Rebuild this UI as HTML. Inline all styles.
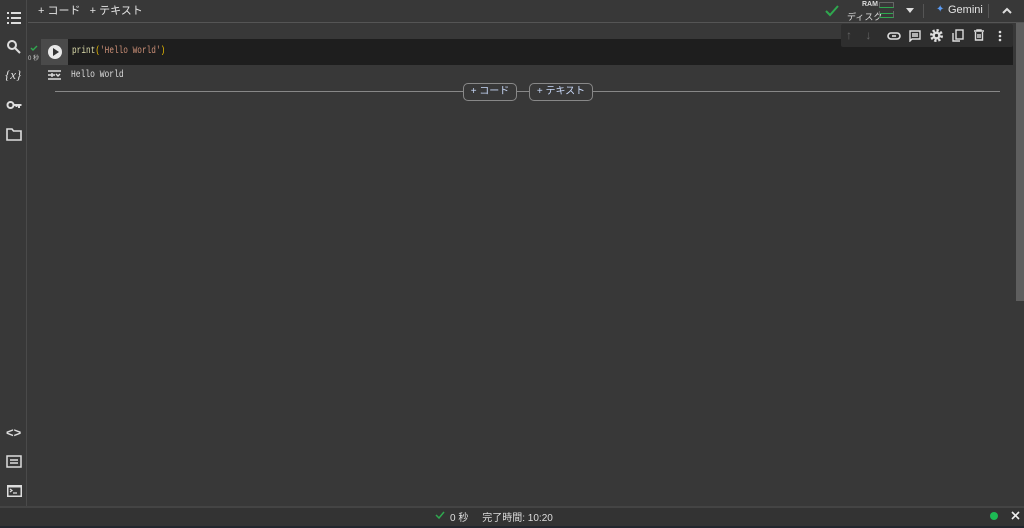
<!DOCTYPE html>
<html><head><meta charset="utf-8"><style>
*{margin:0;padding:0;box-sizing:border-box}
body{width:1024px;height:528px;background:#383838;overflow:hidden;position:relative;font-family:"Liberation Sans","Noto Sans CJK JP",sans-serif;color:#e3e3e3}
.a{position:absolute}
.mono{font-family:"Liberation Mono","Noto Sans CJK JP",monospace}
svg{position:absolute}
</style></head><body>
<div class="a" style="left:0;top:0;width:27px;height:507px;border-right:1px solid #4a4a4a;background:#383838"></div>
<svg style="left:6px;top:10px" width="16" height="16" viewBox="0 0 16 16" fill="#ddd"><rect x="1" y="2" width="2" height="2"/><rect x="5" y="2" width="10" height="2"/><rect x="1" y="7" width="2" height="2"/><rect x="5" y="7" width="10" height="2"/><rect x="1" y="12" width="2" height="2"/><rect x="5" y="12" width="10" height="2"/></svg>
<svg style="left:6px;top:39px" width="16" height="16" viewBox="0 0 16 16" fill="none" stroke="#ddd" stroke-width="2"><circle cx="6" cy="6" r="4"/><path d="M9 9l5 5"/></svg>
<div class="a" style="left:5px;top:67px;font-size:13px;color:#ddd;font-style:italic;font-family:'Liberation Serif',serif">{<i>x</i>}</div>
<svg style="left:6px;top:99px" width="17" height="12" viewBox="0 0 17 12" fill="none" stroke="#ddd" stroke-width="2"><circle cx="4.5" cy="6" r="3"/><path d="M7.5 6h8M13 6v3M10.5 6v2"/></svg>
<svg style="left:6px;top:127px" width="16" height="14" viewBox="0 0 16 14" fill="none" stroke="#ddd" stroke-width="1.6"><path d="M1 2h5l1.5 2H15v9H1z"/></svg>
<div class="a" style="left:6px;top:425px;font-size:13px;font-weight:bold;color:#ddd">&lt;&gt;</div>
<svg style="left:6px;top:455px" width="16" height="13" viewBox="0 0 16 13" fill="none" stroke="#ddd" stroke-width="1.5"><rect x="1" y="1" width="14" height="11"/><path d="M4 5h8M4 8h8"/></svg>
<svg style="left:7px;top:485px" width="15" height="12" viewBox="0 0 15 12"><rect x="0" y="0" width="15" height="12" fill="#ddd"/><rect x="1.5" y="2.5" width="12" height="8" fill="#383838"/><path d="M3 4l2 1.5-2 1.5M6 8h4" stroke="#ddd" stroke-width="1.2" fill="none"/></svg>
<div class="a" style="left:28px;top:22px;width:996px;height:1px;background:#555"></div>
<div class="a" style="left:38px;top:2px;font-size:11px;color:#e3e3e3">+ コード&nbsp;&nbsp; + テキスト</div>
<svg style="left:825px;top:5px" width="14" height="12" viewBox="0 0 14 12" fill="none" stroke="#2fa84f" stroke-width="2"><path d="M1 6l4 4 8-9"/></svg>
<div class="a" style="left:862px;top:1px;font-size:7px;font-weight:bold;color:#ddd">RAM</div>
<div class="a" style="left:847px;top:10px;font-size:9px;color:#ddd">ディスク</div>
<div class="a" style="left:879px;top:2px;width:15px;height:6px;border:1px solid #666;border-bottom-color:#2fa84f"></div>
<div class="a" style="left:879px;top:11px;width:15px;height:7px;border:1px solid #666;border-top:none;border-bottom:1px solid #2fa84f"><div style="margin-top:2px;height:1px;background:#2fa84f"></div></div>
<div class="a" style="left:906px;top:8px;border:4px solid transparent;border-top:5px solid #ddd"></div>
<div class="a" style="left:923px;top:4px;width:1px;height:14px;background:#555"></div>
<div class="a" style="left:936px;top:4px;font-size:10px;color:#5b9cf5">✦</div>
<div class="a" style="left:948px;top:4px;font-size:11px;color:#e3e3e3">Gemini</div>
<div class="a" style="left:988px;top:4px;width:1px;height:14px;background:#555"></div>
<svg style="left:1002px;top:7px" width="10" height="7" viewBox="0 0 10 7" fill="none" stroke="#ddd" stroke-width="2"><path d="M1 6l4-4 4 4"/></svg>
<div class="a" style="left:1016px;top:23px;width:8px;height:278px;background:#5e5e5e"></div>
<div class="a" style="left:41px;top:39px;width:972px;height:26px;background:#1e1e1e"></div>
<div class="a" style="left:41px;top:39px;width:27px;height:26px;background:#4a4a4a"></div>
<div class="a" style="left:48px;top:45px;width:14px;height:14px;border-radius:50%;background:#e8e8e8"></div>
<div class="a" style="left:53px;top:48px;border:4px solid transparent;border-left:6px solid #333;border-right:none"></div>
<svg style="left:30px;top:45px" width="8" height="6" viewBox="0 0 8 6" fill="none" stroke="#2fa84f" stroke-width="1.4"><path d="M1 3l2 2 4-4"/></svg>
<div class="a" style="left:28px;top:53px;font-size:6px;color:#ccc">0 秒</div>
<div class="a mono" style="left:72px;top:45px;font-size:10.5px;white-space:pre;transform:scaleX(0.74);transform-origin:left"><span style="color:#dcdcaa">print</span><span style="color:#f0c000">(</span><span style="color:#ce9178">'Hello World'</span><span style="color:#f0c000">)</span></div>
<svg style="left:47px;top:69px" width="15" height="12" viewBox="0 0 15 12" fill="none" stroke="#ddd" stroke-width="1.4"><path d="M1 2h13M1 6h7M1 10h13M5 4v4M9 5l2 2 2-2"/></svg>
<div class="a mono" style="left:71px;top:69px;font-size:10.5px;color:#ddd;transform:scaleX(0.76);transform-origin:left">Hello World</div>
<div class="a" style="left:55px;top:91px;width:945px;height:1px;background:#888"></div>
<div class="a" style="left:463px;top:83px;width:54px;height:18px;border:1px solid #888;border-radius:5px;background:#383838;font-size:10px;color:#c8d8f8;text-align:center;line-height:16px">+ コード</div>
<div class="a" style="left:529px;top:83px;width:64px;height:18px;border:1px solid #888;border-radius:5px;background:#383838;font-size:10px;color:#c8d8f8;text-align:center;line-height:16px">+ テキスト</div>
<div class="a" style="left:841px;top:24px;width:172px;height:23px;background:#2e2e2e;border-radius:2px"></div>
<div class="a" style="left:846px;top:28px;font-size:12px;color:#666">↑&nbsp;&nbsp;&nbsp; ↓</div>
<svg style="left:887px;top:32px" width="14" height="8" viewBox="0 0 14 8" fill="none" stroke="#ddd" stroke-width="1.6"><rect x="1" y="1" width="12" height="6" rx="3"/><path d="M5 4h4"/></svg>
<svg style="left:909px;top:30px" width="12" height="12" viewBox="0 0 12 12" fill="none" stroke="#ddd" stroke-width="1.4"><path d="M1 1h10v8H3L1 11z M3 4h6M3 6h6"/></svg>
<svg style="left:930px;top:29px" width="13" height="13" viewBox="0 0 13 13"><circle cx="6.5" cy="6.5" r="5" fill="none" stroke="#ddd" stroke-width="3" stroke-dasharray="2.2 1.7"/><circle cx="6.5" cy="6.5" r="4" fill="#ddd"/><circle cx="6.5" cy="6.5" r="1.6" fill="#2e2e2e"/></svg>
<svg style="left:952px;top:29px" width="12" height="13" viewBox="0 0 12 13" fill="none" stroke="#ddd" stroke-width="1.4"><rect x="4" y="1" width="7" height="9"/><path d="M1 4v8h7"/></svg>
<svg style="left:974px;top:29px" width="10" height="12" viewBox="0 0 10 12" fill="none" stroke="#ddd" stroke-width="1.4"><path d="M0 2h10M3 2V1h4v1M1.5 3v8h7V3M4 5v4M6 5v4"/></svg>
<svg style="left:998px;top:30px" width="4" height="12" viewBox="0 0 4 12" fill="#ddd"><circle cx="2" cy="2" r="1.3"/><circle cx="2" cy="6" r="1.3"/><circle cx="2" cy="10" r="1.3"/></svg>
<div class="a" style="left:0;top:506px;width:1024px;height:22px;background:#333;border-top:2px solid #444"></div>
<div class="a" style="left:0;top:526px;width:1024px;height:2px;background:#22272e"></div>
<svg style="left:435px;top:511px" width="10" height="8" viewBox="0 0 10 8" fill="none" stroke="#2fa84f" stroke-width="1.5"><path d="M1 4l3 3 5-6"/></svg>
<div class="a" style="left:450px;top:509px;font-size:10px;color:#ddd">0 秒&nbsp;&nbsp;&nbsp;&nbsp; 完了時間: 10:20</div>
<div class="a" style="left:990px;top:512px;width:8px;height:8px;border-radius:50%;background:#1db954"></div>
<svg style="left:1011px;top:511px" width="9" height="9" viewBox="0 0 9 9" stroke="#eee" stroke-width="1.6"><path d="M1 1l7 7M8 1l-7 7"/></svg>
</body></html>
